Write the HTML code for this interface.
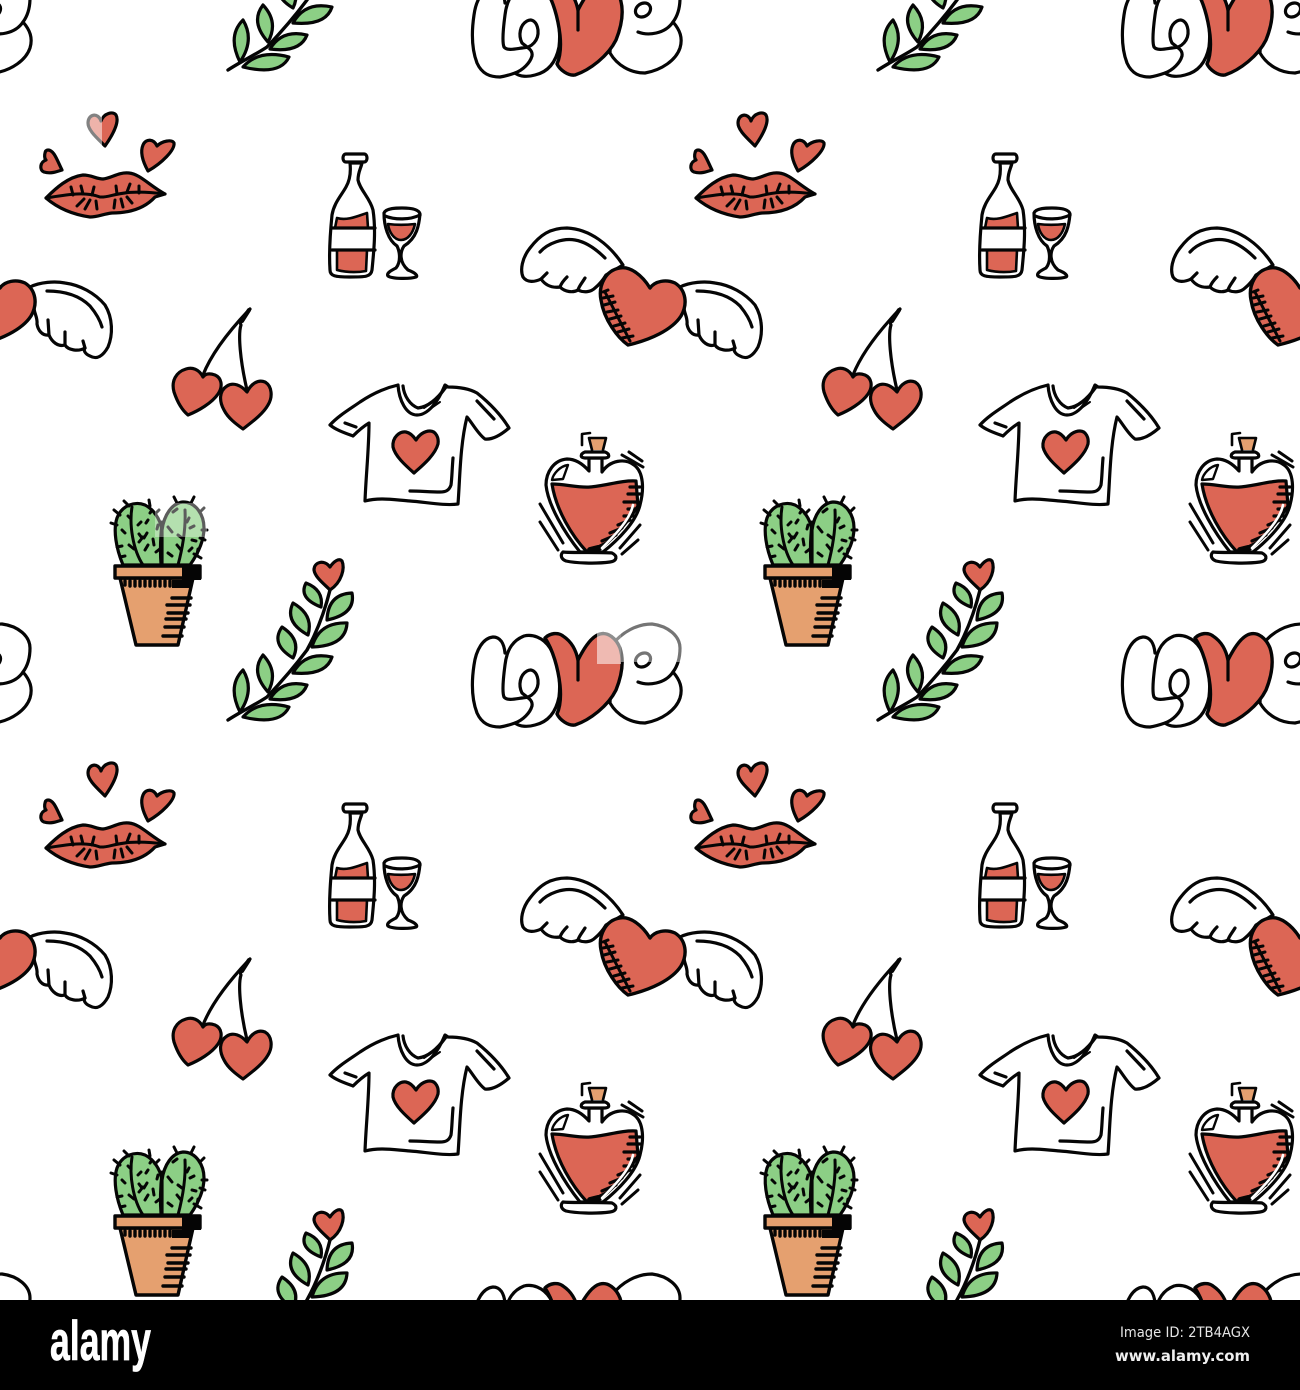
<!DOCTYPE html>
<html><head><meta charset="utf-8"><style>
html,body{margin:0;padding:0;background:#fff;width:1300px;height:1390px;overflow:hidden}
svg{display:block}
</style></head><body>
<svg xmlns="http://www.w3.org/2000/svg" width="1300" height="1390" viewBox="0 0 1300 1390">
<defs>
<g id="t" fill="none" stroke="#050505" stroke-width="3.2" stroke-linecap="round" stroke-linejoin="round">
<!-- hearts and lips -->
<g fill="#dc6655">
<path d="M105,146C96,137 88,130 88,123C88,114 98,112 101,121C104,113 113,111 116,115C120,122 112,136 105,146Z"/>
<path d="M148,171C143,162 140,152 143,145C146,138 154,139 157,146C162,141 172,139 174,143C175,150 162,163 148,171Z"/>
<path d="M62,170C57,160 54,150 48,150C44,150 44,158 46,160C40,162 39,170 44,172C50,174 56,172 62,170Z"/>
<path d="M46,198C56,188 68,177 83,175C92,175 96,179 103,179C112,178 118,172 129,173C140,174 150,186 165,194L155,197C145,208 130,213 112,213C103,214 98,217 90,217C76,215 60,210 46,198Z"/>
</g>
<path d="M46,198C65,195 85,191 100,197C112,198 120,188 165,194" stroke-width="3"/>
<path d="M71,187l2,8M81,186l2,8M94,187l-2,8M116,186l1,8M130,184l-3,8M139,186l0,7M84,199l-7,7M90,200l-5,9M96,201l1,8M115,200l-1,8M121,199l2,8M127,197l5,6" stroke-width="3"/>
<!-- bottle -->
<path fill="#fff" d="M350,163C351,172 350,180 346,187C341,196 334,203 332,215C330,235 329,255 330,270C330,276 335,277 350,277C365,277 371,277 372,270C374,250 376,230 373,210C370,198 360,190 358,180C358,172 361,168 362,163Z"/>
<path fill="#fff" d="M346,154h18c4,0 4,8 0,8h-18c-4,0 -4,-8 0,-8Z"/>
<path fill="#dc6655" stroke-width="2.6" d="M337,218C347,221 358,216 367,213L368,228H335Z"/>
<path fill="#dc6655" stroke-width="2.6" d="M337,250H367L366,271C355,273 345,272 337,270Z"/>
<path d="M332,228H375M332,250H375"/>
<path fill="#fff" d="M384,213C386,208 397,208 402,208C410,208 419,209 420,214C419,225 417,238 404,246C400,252 399,262 408,270C416,273 418,276 416,277C410,279 392,279 388,276C386,273 392,270 396,268C401,262 400,252 397,246C388,240 384,226 384,213Z"/>
<path d="M385,216C395,220 410,220 420,215"/>
<path fill="#dc6655" stroke-width="2.6" d="M388,224C396,225 406,225 415,224C413,233 408,240 401,240C394,240 389,232 388,224Z"/>
<!-- wings -->
<path fill="#fff" d="M623,265C610,245 590,229 567,228C550,228 540,235 530,248C522,258 520,270 523,277C527,283 535,282 541,279C546,286 553,288 560,287C565,292 573,293 578,290C584,293 591,292 595,288C600,284 603,280 606,275Z"/>
<path d="M540,252C548,243 563,238 575,240C587,242 597,250 605,258M547,273C543,277 542,278 541,279M567,277C563,281 561,284 560,287M585,278C582,283 579,286 578,290"/>
<path fill="#fff" d="M680,287C690,282 705,281 715,283C730,285 745,293 755,305C763,318 763,335 758,347C753,356 747,360 740,356C735,354 733,350 735,348C728,352 718,350 715,345C708,347 702,342 699,335C692,336 688,330 687,324C688,317 683,312 684,305Z"/>
<path d="M697,291C715,291 730,296 740,306C745,312 750,320 752,327M735,348L733,341M715,345L715,332M699,335L698,320"/>
<path fill="#dc6655" stroke-width="3.4" d="M650,288C642,275 630,266 620,268C606,270 598,285 601,300C604,320 618,338 628,345C650,340 672,330 681,316C688,304 686,290 675,283C666,279 655,281 650,288Z"/>
<path stroke-width="3" d="M603,292L608,290M603,298L613,296M604,305L615,302M607,312L618,310M610,319L621,316M614,326L625,323M618,332L629,329M622,338L633,336M605,292L630,341"/>
<!-- cherries -->
<path d="M250,309C243,316 239,322 241,325C238,334 240,360 247,390M248,311C232,328 212,352 203,375" />
<path stroke-width="4.2" d="M249,310L242,321"/>
<path fill="#dc6655" d="M203,377C199,369 192,367 186,369C176,372 171,381 174,392C177,401 182,410 188,415C198,411 212,403 218,394C223,387 222,378 215,375C209,373 205,374 203,377Z"/>
<path fill="#dc6655" d="M247,392C241,385 233,382 227,386C219,391 219,401 224,410C228,418 236,424 243,429C252,422 263,414 268,405C273,397 272,386 265,382C258,379 251,384 247,392Z"/>
<!-- tshirt -->
<path fill="#fff" d="M398,385C385,388 372,394 360,402C350,409 338,416 330,425C336,430 345,433 353,436C358,431 364,426 369,423C369,448 366,475 365,501C380,497 395,500 410,501C425,502 445,506 458,504C460,478 460,445 467,417C473,424 478,434 485,439C493,440 502,434 509,428C503,418 492,405 477,393C468,388 458,387 448,387L445,385C438,402 428,415 417,415C406,415 399,400 398,385Z"/>
<path d="M403,386C404,396 410,405 418,408C428,407 438,398 446,387"/>
<path stroke-width="2" d="M424,408L437,399M427,411L440,402"/>
<path d="M345,423L356,427M477,401L494,419M453,458C452,470 452,478 451,485C449,491 445,492 440,492C430,492 420,491 410,491"/>
<path fill="#dc6655" d="M414,473C405,465 395,456 393,447C392,437 400,431 406,432C411,433 414,437 416,440C419,435 424,431 430,431C436,431 439,438 438,444C435,455 423,465 414,473Z"/>
<!-- potion -->
<path fill="#e5a06f" stroke="none" d="M589,438H606L603,450H592Z"/>
<path stroke-width="2.6" d="M589,438H606L603,450M592,450L589,438M582,445L582,434L590,433"/>
<path fill="#fff" d="M589,458V471C582,463 575,459 567,459C554,460 546,472 546,485C548,505 564,532 580,552L603,552C618,540 636,522 640,505C644,490 644,472 634,465C625,458 610,460 602,472V458Z"/>
<path fill="#fff" d="M585,452H605C610,454 610,458 605,458H585C580,458 580,454 585,452Z"/>
<path fill="#dc6655" d="M552,484C565,484 578,488 590,487C605,486 622,480 636,481L638,506C628,522 612,540 596,552H587C572,536 556,510 552,484Z"/>
<path fill="#fff" d="M568,465C560,466 553,474 552,480L563,479Z" stroke-width="2.4"/>
<path fill="#fff" d="M563,552C570,553 605,552 612,553C618,556 617,561 610,562C595,564 575,563 566,561C561,559 560,555 563,552Z"/>
<path stroke-width="3" d="M540,504L563,543M540,522L558,550M640,525L620,548M638,540L622,554M622,455L643,467M629,452L642,461"/>
<path stroke-width="3.2" d="M630,487H640M628,494H640M624,502H638M628,509H636M624,516H634M618,525L630,520M610,533L622,528M602,541L616,535M594,549L608,542"/>
<path stroke-width="6" d="M590,550L598,548"/>
<path stroke-width="2.6" stroke="#fff" d="M633,505C630,520 614,536 602,548"/>
<!-- cactus -->
<g fill="#8ccf85">
<path d="M123,565C116,548 113,530 117,518C122,505 135,501 145,505C153,509 160,518 162,530L162,565Z"/>
<path d="M162,565V530C164,515 172,503 183,502C196,502 204,515 204,528C204,542 197,555 190,565Z"/>
</g>
<path stroke-width="3" d="M132,507C129,525 133,550 143,565M162,522C160,540 160,553 161,565M185,510C186,530 182,550 178,565"/>
<path stroke-width="3" d="M124,501L129,506M114,510L120,515M111,523L117,525M149,500L150,506M159,510L155,514M174,497L177,503M194,497L191,503M204,508L200,512M207,530L202,530M205,540L200,538M198,549L197,555M201,558L194,554M117,547L122,546M120,557L125,556"/>
<path stroke-width="3" d="M128,516l3,3M122,530l3,3M141,522l-3,3M148,520l-2,3M152,510l-2,3M139,534l3,4M143,537l-4,5M147,533l-3,5M129,545l5,4M145,550l3,-5M156,552l5,-4M168,527l4,5M178,535l4,3M177,545l4,5M168,553l4,3M190,528l4,-2M192,540l4,1M192,548l-3,3M153,539l1,6M157,529l1,-4M173,512l4,-3M187,522l2,-4"/>
<!-- pot -->
<path fill="#e5a06f" stroke-width="3.4" d="M120,578L136,645H178L193,578Z"/>
<path fill="#e5a06f" stroke-width="3.4" d="M115,566H200V578H115Z"/>
<path fill="#050505" stroke="none" d="M182,565H201V580H182ZM172,580H193L191,588H172Z"/>
<path stroke-width="3.4" d="M125,581v4M130,581v5M135,581v5M140,581v5M145,581v5M150,581v5M155,581v5M160,581v5M165,581v5M170,581v5"/>
<path stroke-width="3.4" d="M172,598H191M167,605H190M168,613H188M166,619H186M165,627H184M163,636H182"/>
<!-- branch -->
<path stroke-width="3.4" d="M228,720C240,712 255,705 267,697C285,678 298,662 307,650C318,630 325,610 330,590"/>
<g fill="#8ccf85">
<path d="M240,712Q227,686 243,670Q255,690 240,712Z"/>
<path d="M268,692Q250,672 263,655Q279,672 268,692Z"/>
<path d="M293,658Q270,644 282,627Q302,640 293,658Z"/>
<path d="M308,635Q284,622 293,603Q314,615 308,635Z"/>
<path d="M321,607Q298,598 306,583Q324,590 321,607Z"/>
<path d="M327,620Q328,594 352,593Q356,614 327,620Z"/>
<path d="M312,647Q319,622 347,623Q346,646 312,647Z"/>
<path d="M293,673Q305,651 332,657Q326,676 293,673Z"/>
<path d="M270,699Q282,679 307,685Q300,703 270,699Z"/>
<path d="M243,717Q259,699 289,707Q280,726 243,717Z"/>
</g>
<path fill="#dc6655" d="M330,590C323,583 315,577 314,570C314,562 324,559 330,567C334,561 339,558 342,561C345,568 342,582 330,590Z"/>
<!-- love -->
<path fill="#fff" d="M505,653C504,643 500,637 493,637C483,638 476,650 474,665C471,685 472,700 477,713C482,724 490,727 500,727C507,726 512,724 515,723C520,727 528,727 535,725C548,722 556,712 559,697C561,680 558,660 550,648C543,637 532,634 524,636C514,640 507,648 505,665C503,680 502,692 504,697C507,701 515,699 522,698"/>
<path d="M522,698C532,698 539,690 538,680C537,672 532,668 527,671C520,675 518,685 522,693C528,698 533,700 532,706C530,713 523,720 515,723"/>
<path fill="#fff" d="M612,645C622,632 637,624 652,624C668,626 680,636 680,648C680,660 676,668 673,672C680,680 683,688 680,698C676,710 662,720 645,723C630,723 617,715 610,703Z"/>
<path d="M638,682C648,686 665,684 673,672"/>
<ellipse cx="643" cy="660" rx="8" ry="6.5" transform="rotate(-35 643 660)" fill="#fff"/>
<path fill="#dc6655" stroke-width="3.4" d="M545,638C550,633 558,632 563,636C572,642 576,650 578,660C584,648 592,636 600,634C608,632 616,638 620,648C624,660 622,675 616,690C608,706 590,720 575,725C568,726 560,720 557,714C561,705 561,695 560,685C558,668 553,650 545,638Z"/>
<path d="M578,660L578,680"/>
</g>
</defs>
<rect width="1300" height="1390" fill="#fff"/>
<use href="#t" x="-650" y="-650"/><use href="#t" x="0" y="-650"/><use href="#t" x="650" y="-650"/>
<use href="#t" x="-650" y="0"/><use href="#t" x="0" y="0"/><use href="#t" x="650" y="0"/>
<use href="#t" x="-650" y="650"/><use href="#t" x="0" y="650"/><use href="#t" x="650" y="650"/>
<!-- watermark patches -->
<g fill="#fff">
<rect x="86" y="112" width="16" height="36" opacity=".5"/>
<rect x="155" y="503" width="52" height="34" opacity=".35"/>
<rect x="597" y="632" width="24" height="32" opacity=".55"/>
<rect x="621" y="622" width="61" height="40" opacity=".45"/>
</g>
<rect x="0" y="1300" width="1300" height="90" fill="#000"/>
<text x="50" y="1360" fill="#fff" stroke="#fff" stroke-width=".7" font-family="'Liberation Sans',sans-serif" font-weight="700" font-size="56" textLength="101" lengthAdjust="spacingAndGlyphs">alamy</text>
<text x="1120" y="1337" fill="#e6e6e6" font-family="'DejaVu Sans',sans-serif" font-size="14" textLength="130" lengthAdjust="spacingAndGlyphs">Image ID: 2TB4AGX</text>
<text x="1115" y="1361" fill="#f0f0f0" font-family="'DejaVu Sans',sans-serif" font-weight="700" font-size="15" textLength="135" lengthAdjust="spacingAndGlyphs">www.alamy.com</text>
</svg>
</body></html>
